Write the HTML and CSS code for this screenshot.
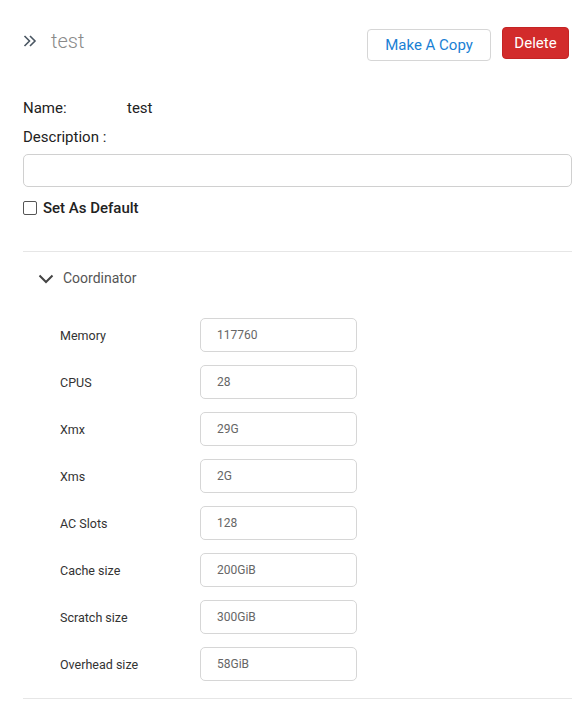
FILE: index.html
```html
<!DOCTYPE html>
<html>
<head>
<meta charset="utf-8">
<link rel="stylesheet" href="styles.css">
</head>
<body>
<div class="page">
  <div class="header">
    <div class="title">
      <svg class="dbl" width="14" height="12" viewBox="0 0 14 12"><path d="M1.5 1 L6.5 6 L1.5 11 M7 1 L12 6 L7 11" fill="none" stroke="#4a5662" stroke-width="1.6"/></svg>
      <span class="title-text">test</span>
    </div>
    <div class="actions">
      <button class="btn btn-copy">Make A Copy</button>
      <button class="btn btn-delete">Delete</button>
    </div>
  </div>

  <div class="name-row"><span class="name-label">Name:</span><span class="name-value">test</span></div>
  <div class="desc-label">Description :</div>
  <input class="desc-input" type="text">
  <label class="default-row"><span class="checkbox"></span><span class="default-text">Set As Default</span></label>

  <div class="section">
    <div class="section-head">
      <svg class="chev" width="16" height="10" viewBox="0 0 16 10"><path d="M1.5 1.5 L8 8 L14.5 1.5" fill="none" stroke="#444" stroke-width="2"/></svg>
      <span class="section-title">Coordinator</span>
    </div>
    <div class="fields">
      <div class="field"><span class="flabel">Memory</span><div class="finput">117760</div></div>
      <div class="field"><span class="flabel">CPUS</span><div class="finput">28</div></div>
      <div class="field"><span class="flabel">Xmx</span><div class="finput">29G</div></div>
      <div class="field"><span class="flabel">Xms</span><div class="finput">2G</div></div>
      <div class="field"><span class="flabel">AC Slots</span><div class="finput">128</div></div>
      <div class="field"><span class="flabel">Cache size</span><div class="finput">200GiB</div></div>
      <div class="field"><span class="flabel">Scratch size</span><div class="finput">300GiB</div></div>
      <div class="field"><span class="flabel">Overhead size</span><div class="finput">58GiB</div></div>
    </div>
  </div>
</div>
</body>
</html>
```

FILE: styles.css
```css
* { box-sizing: border-box; }
html, body { margin: 0; padding: 0; background: #fff; }
body { font-family: Roboto, "Liberation Sans", sans-serif; color: #222; }
.page { padding: 0 16px 0 23px; }

.header { display: flex; justify-content: space-between; align-items: flex-start; height: 99px; }
.title { display: flex; align-items: center; padding-top: 29px; }
.dbl { margin-right: 14px; }
.title-text { font-size: 20px; font-weight: 300; color: #8a8a8a; }
.actions { display: flex; gap: 11px; padding-top: 27px; margin-right: 3px; }
.btn { font-family: Roboto, "Liberation Sans", sans-serif; font-size: 15px; border-radius: 4px; cursor: pointer; }
.btn-copy { margin-top: 2px; width: 124px; height: 32px; background: #fff; color: #1a7fd4; border: 1px solid #d6d6d6; }
.btn-delete { width: 67px; height: 32px; background: #d22b2b; color: #fff; border: 1px solid #c42424; }

.name-row { display: flex; font-size: 15px; line-height: 18px; height: 19px; color: #222; }
.name-label { width: 104px; }
.desc-label { font-size: 15px; line-height: 18px; margin-top: 10px; color: #222; }
.desc-input { display: block; width: 549px; height: 33px; margin-top: 8px; border: 1px solid #d0d0d0; border-radius: 5px; }
.default-row { display: flex; align-items: center; margin-top: 12px; }
.checkbox { width: 14px; height: 14px; border: 1px solid #555; border-radius: 2px; margin-right: 6px; }
.default-text { font-size: 15px; font-weight: 500; color: #222; }

.section { margin-top: 34px; width: 549px; border-top: 1px solid #e6e6e6; border-bottom: 1px solid #e6e6e6; padding-bottom: 17px; }
.section-head { display: flex; align-items: center; height: 51px; padding-left: 15px; }
.chev { margin-right: 9px; margin-top: 3px; }
.section-title { font-size: 14px; color: #555; }
.fields { padding-top: 15px; display: flex; flex-direction: column; gap: 13px; }
.field { display: flex; align-items: center; height: 34px; }
.flabel { width: 140px; padding-left: 37px; font-size: 12.5px; color: #333; box-sizing: content-box; }
.finput { width: 157px; height: 34px; border: 1px solid #d6d6d6; border-radius: 5px; padding-left: 16px; display: flex; align-items: center; font-size: 12px; color: #666; }
```
